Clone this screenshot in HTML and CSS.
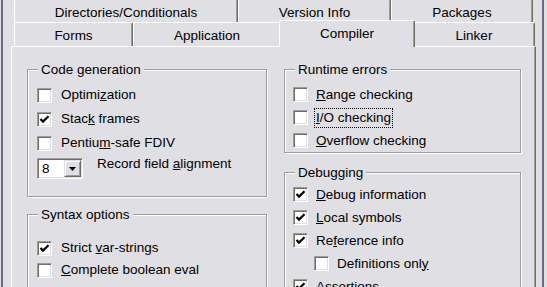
FILE: index.html
```html
<!DOCTYPE html>
<html>
<head>
<meta charset="utf-8">
<title>Project Options - Compiler</title>
<link rel="stylesheet" href="styles.css">
</head>
<body>
<div class="window">
  <div class="frame">
    <div class="tabs">
      <div class="tab-row row-back">
        <div class="tab t-dir">Directories/Conditionals</div>
        <div class="tab t-ver">Version Info</div>
        <div class="tab t-pkg">Packages</div>
      </div>
      <div class="tab-row row-front">
        <div class="tab t-forms">Forms</div>
        <div class="tab t-app">Application</div>
        <div class="tab tab-sel t-comp">Compiler</div>
        <div class="tab t-link">Linker</div>
      </div>
    </div>
    <div class="panel">
      <div class="col col-l">
        <fieldset class="group g-code">
          <legend>Code generation</legend>
          <div class="row"><span class="box"></span><span class="lbl">Optimi<u>z</u>ation</span></div>
          <div class="row"><span class="box"><svg viewBox="0 0 11 11"><path d="M1.5 5 L4 7.6 L9.5 2.2"/></svg></span><span class="lbl">Stac<u>k</u> frames</span></div>
          <div class="row"><span class="box"></span><span class="lbl">Pentiu<u>m</u>-safe FDIV</span></div>
          <div class="row row-combo">
            <div class="combo">
              <span class="combo-val">8</span>
              <span class="combo-btn"><svg viewBox="0 0 7 4"><polygon points="0,0 7,0 3.5,4"/></svg></span>
            </div>
            <span class="lbl">Record field <u>a</u>lignment</span>
          </div>
        </fieldset>
        <fieldset class="group g-syntax">
          <legend>Syntax options</legend>
          <div class="row"><span class="box"><svg viewBox="0 0 11 11"><path d="M1.5 5 L4 7.6 L9.5 2.2"/></svg></span><span class="lbl">Strict <u>v</u>ar-strings</span></div>
          <div class="row"><span class="box"></span><span class="lbl"><u>C</u>omplete boolean eval</span></div>
        </fieldset>
      </div>
      <div class="col col-r">
        <fieldset class="group g-run">
          <legend>Runtime errors</legend>
          <div class="row"><span class="box"></span><span class="lbl"><u>R</u>ange checking</span></div>
          <div class="row"><span class="box"></span><span class="lbl focus"><u>I</u>/O checking</span></div>
          <div class="row"><span class="box"></span><span class="lbl"><u>O</u>verflow checking</span></div>
        </fieldset>
        <fieldset class="group g-debug">
          <legend>Debugging</legend>
          <div class="row"><span class="box"><svg viewBox="0 0 11 11"><path d="M1.5 5 L4 7.6 L9.5 2.2"/></svg></span><span class="lbl"><u>D</u>ebug information</span></div>
          <div class="row"><span class="box"><svg viewBox="0 0 11 11"><path d="M1.5 5 L4 7.6 L9.5 2.2"/></svg></span><span class="lbl"><u>L</u>ocal symbols</span></div>
          <div class="row"><span class="box"><svg viewBox="0 0 11 11"><path d="M1.5 5 L4 7.6 L9.5 2.2"/></svg></span><span class="lbl">Re<u>f</u>erence info</span></div>
          <div class="row indent"><span class="box"></span><span class="lbl">Definitions onl<u>y</u></span></div>
          <div class="row"><span class="box"><svg viewBox="0 0 11 11"><path d="M1.5 5 L4 7.6 L9.5 2.2"/></svg></span><span class="lbl">Assertions</span></div>
        </fieldset>
      </div>
    </div>
  </div>
</div>
</body>
</html>
```

FILE: styles.css
```css
* { box-sizing: border-box; }
html, body { margin: 0; padding: 0; }
body {
  background: #e0dfe3;
  font-family: "Liberation Sans", Arial, sans-serif;
  font-size: 13.5px;
  color: #000;
}
.window {
  width: 547px;
  height: 287px;
  overflow: hidden;
  padding: 0 3px 0 1px;
}
.frame {
  height: 100%;
  display: flex;
  flex-direction: column;
  border-left: 2px solid #6d6b84;
  border-right: 2px solid #6d6b84;
}

/* tabs */
.tabs { flex: none; margin-top: -1px; padding-left: 11px; }
.tab-row { display: flex; }
.row-back { height: 23px; }
.row-front { height: 24px; }
.tab {
  flex: none;
  height: 100%;
  text-align: center;
  white-space: nowrap;
  border-top: 1px solid #fff;
  border-left: 1px solid #fff;
  border-right: 1px solid #716f64;
  box-shadow: inset -1px 0 #9d9da1;
  border-radius: 2px 2px 0 0;
  padding-top: 3px;
  line-height: 19px;
  background: #e0dfe3;
}
.row-front .tab { padding-bottom: 1px; }
.row-front .tab-sel {
  position: relative;
  z-index: 2;
  height: 27px;
  margin: -2px -2px 0;
  padding-bottom: 4px;
}
.t-dir { width: 224px; }
.t-ver { width: 153px; }
.t-pkg { width: 142px; }
.t-forms { width: 119px; }
.t-app { width: 148px; }
.t-comp { width: 136px; }
.t-link { width: 122px; }

/* panel */
.panel {
  flex: 1;
  width: 525px;
  margin-left: 8px;
  border-top: 1px solid #fff;
  border-left: 1px solid #fff;
  border-right: 1px solid #716f64;
  box-shadow: inset -1px 0 #9d9da1;
  padding: 14px 0 0 15px;
  display: grid;
  grid-template-columns: 240px 237px;
  column-gap: 17px;
  align-items: start;
  align-content: start;
}

/* group boxes */
.group {
  margin: 0;
  padding: 0;
  min-width: 0;
  border: 1px solid #9d9da1;
  box-shadow: inset 1px 1px #fff, 1px 1px #fff;
}
.group legend {
  margin-left: 10px;
  padding: 2px 3px 0;
  line-height: 14px;
  background: #e0dfe3;
  white-space: nowrap;
}
.g-code { padding: 6px 0 17px; }
.g-syntax { margin-top: 9px; padding: 15px 0 20px; }
.g-run { padding: 6px 0 0; }
.g-debug { margin-top: 11px; padding: 3px 0 20px; }

/* rows */
.row { display: flex; align-items: center; height: 23px; }
.g-code .row { height: 24px; }
.g-syntax .row { height: 22px; }

.box {
  flex: none;
  width: 15px;
  height: 15px;
  padding: 1px;
  background: #fff;
  border: 1px solid;
  border-color: #9d9da1 #fff #fff #9d9da1;
  box-shadow: inset 1px 1px #716f64, inset -1px -1px #e0dfe3;
}
.box svg { display: block; width: 11px; height: 11px; }
.box path { fill: none; stroke: #000; stroke-width: 2.2; }
.col-l .box { margin-left: 9px; margin-right: 7px; }
.col-r .box { margin-left: 8px; margin-right: 6px; }
.col-r .indent .box { margin-left: 29px; }

.lbl {
  border: 1px solid transparent;
  padding: 0 1px;
  line-height: 18px;
  white-space: nowrap;
}
.lbl.focus { border: 1px dotted #000; }

/* combo */
.row-combo { align-items: flex-start; }
.row-combo .lbl { line-height: 16px; }
.combo {
  flex: none;
  display: flex;
  width: 46px;
  height: 21px;
  margin: 3px 12px 0 9px;
  padding: 1px;
  background: #fff;
  border: 1px solid;
  border-color: #9d9da1 #fff #fff #9d9da1;
  box-shadow: inset 1px 1px #716f64, inset -1px -1px #e0dfe3;
}
.combo-val {
  flex: 1;
  padding-left: 3px;
  line-height: 17px;
}
.combo-btn {
  flex: none;
  width: 17px;
  height: 17px;
  display: flex;
  align-items: center;
  justify-content: center;
  background: #e0dfe3;
  border: 1px solid;
  border-color: #e0dfe3 #716f64 #716f64 #e0dfe3;
  box-shadow: inset 1px 1px #fff, inset -1px -1px #9d9da1;
}
.combo-btn svg { display: block; width: 7px; height: 4px; }
.combo-btn polygon { fill: #000; }
```
